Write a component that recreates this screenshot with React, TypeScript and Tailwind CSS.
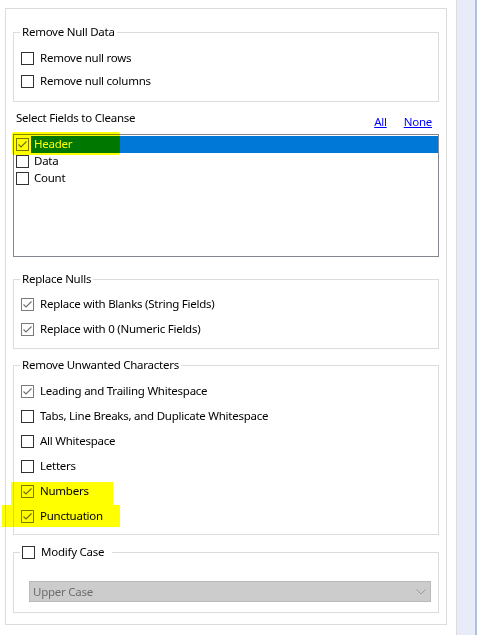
import React from "react";

const font = { fontFamily: '"Noto Sans", "Open Sans", sans-serif' };

function Box({ checked }: { checked?: boolean }) {
  return (
    <span
      className={`relative flex h-[13px] w-[13px] shrink-0 items-center justify-center border bg-white ${
        checked ? "border-[#7a7a7a]" : "border-[#333333]"
      }`}
    >
      {checked && (
        <svg width="11" height="11" viewBox="0 0 11 11" className="absolute left-0 top-0">
          <path d="M1.5 5.5 L4 8 L9.5 2.5" fill="none" stroke="#6e6e6e" strokeWidth="1.1" />
        </svg>
      )}
    </span>
  );
}

function Row({ label, checked, h = "h-[25px]" }: { label: string; checked?: boolean; h?: string }) {
  return (
    <div className={`flex ${h} items-center pl-[7px]`}>
      <Box checked={checked} />
      <span className="ml-[6px] -translate-y-px leading-[16px]">{label}</span>
    </div>
  );
}

function Group({
  title,
  className,
  children,
}: {
  title: React.ReactNode;
  className: string;
  children: React.ReactNode;
}) {
  return (
    <div className={`relative border border-[#dcdcdc] ${className}`}>
      <div className="absolute left-[6px] top-[-9px] flex h-[16px] items-center bg-white px-[2px] leading-[16px]">
        {title}
      </div>
      {children}
    </div>
  );
}

function ListRow({ label, checked, selected }: { label: string; checked?: boolean; selected?: boolean }) {
  return (
    <div className="flex h-[17px] items-center pl-[2px]">
      <Box checked={checked} />
      <div
        className={`ml-[2px] flex h-full flex-1 items-center pl-[3px] leading-[16px] ${
          selected ? "bg-[#0078d7] text-white" : ""
        }`}
      >
        <span className="-translate-y-px">{label}</span>
      </div>
    </div>
  );
}

export default function App() {
  return (
    <div
      className="relative flex h-[635px] w-[477px] bg-white text-[11.5px] tracking-[-0.25px] text-black"
      style={font}
    >
      <div className="pl-[5px] pt-[8px]">
        <div className="flex h-[617px] w-[442px] flex-col border border-[#dcdcdc] px-[7px]">
          <Group title="Remove Null Data" className="mt-[23px] pb-[8px] pt-[14px]">
            <Row label="Remove null rows" h="h-[23px]" />
            <Row label="Remove null columns" h="h-[23px]" />
          </Group>

          <div className="mt-[8px] flex h-[16px] items-start justify-between leading-[16px]">
            <span className="ml-[3px]">Select Fields to Cleanse</span>
            <div className="mr-[7px] mt-[4px] flex gap-[17px] leading-[16px]">
              <span className="text-[#0000ff] underline">All</span>
              <span className="text-[#0000ff] underline">None</span>
            </div>
          </div>

          <div className="mt-[8px] h-[123px] border border-[#828790] pt-[1px]">
            <ListRow label="Header" checked selected />
            <ListRow label="Data" />
            <ListRow label="Count" />
          </div>

          <Group title="Replace Nulls" className="mt-[22px] pb-[6px] pt-[12px]">
            <Row label="Replace with Blanks (String Fields)" checked />
            <Row label="Replace with 0 (Numeric Fields)" checked />
          </Group>

          <Group title="Remove Unwanted Characters" className="mt-[16px] pb-[5px] pt-[13px]">
            <Row label="Leading and Trailing Whitespace" checked />
            <Row label="Tabs, Line Breaks, and Duplicate Whitespace" />
            <Row label="All Whitespace" />
            <Row label="Letters" />
            <Row label="Numbers" checked />
            <Row label="Punctuation" checked />
          </Group>

          <Group
            title={
              <span className="flex items-center pl-[0px] pr-[6px]">
                <Box />
                <span className="ml-[6px]">Modify Case</span>
              </span>
            }
            className="mt-[17px] pb-[10px] pl-[15px] pr-[7px] pt-[28px]"
          >
            <div className="flex h-[21px] items-center justify-between border border-[#b9b9b9] bg-[#cccccc] pl-[3px] pr-[4px] text-[#6d6d6d]">
              <span className="leading-[16px]">Upper Case</span>
              <svg width="10" height="6" viewBox="0 0 10 6">
                <path d="M0.5 0.5 L5 5 L9.5 0.5" fill="none" stroke="#9a9a9a" strokeWidth="1" />
              </svg>
            </div>
          </Group>
        </div>
      </div>

      <div className="ml-[9px] flex">
        <div className="h-full w-[1px] bg-[#dcdcdc]" />
        <div className="h-full w-[18px] bg-[#e8ecf8]" />
        <div className="h-full w-[2px] bg-[#b0c0e0]" />
      </div>

      {/* highlighter marks */}
      <div className="pointer-events-none absolute left-[12px] top-[132px] h-[23px] w-[108px] rounded-[2px] bg-[#ffff00] mix-blend-multiply" />
      <div className="pointer-events-none absolute left-[11px] top-[482px] h-[23px] w-[102px] bg-[#ffff00] mix-blend-multiply" />
      <div className="pointer-events-none absolute left-[2px] top-[505px] h-[22px] w-[118px] bg-[#ffff00] mix-blend-multiply" />
    </div>
  );
}
